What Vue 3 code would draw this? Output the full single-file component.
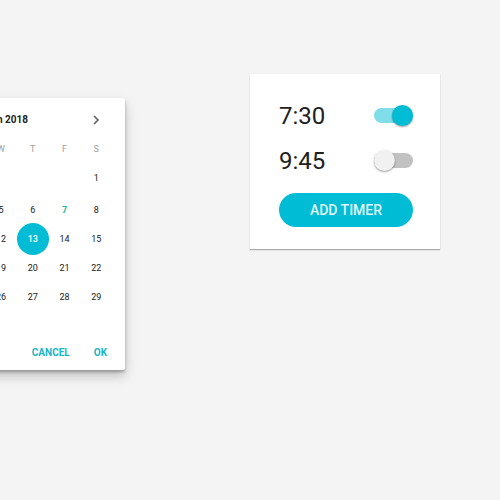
<script setup>
import { ref } from "vue";

const weekdays = ["S", "M", "T", "W", "T", "F", "S"];
const weeks = [
  [null, null, null, null, null, null, 1],
  [2, 3, 4, 5, 6, 7, 8],
  [9, 10, 11, 12, 13, 14, 15],
  [16, 17, 18, 19, 20, 21, 22],
  [23, 24, 25, 26, 27, 28, 29],
  [30, 31, null, null, null, null, null],
];
const today = 7;
const selected = ref(13);

const timers = ref([
  { id: "timer-1", time: "7:30", on: true },
  { id: "timer-2", time: "9:45", on: false },
]);
</script>

<template>
  <main class="board">
    <section class="calendar">
      <header class="month">
        <button class="arrow" aria-label="Previous month">
          <svg viewBox="0 0 24 24" width="24" height="24">
            <path d="M14 8l-4 4 4 4" />
          </svg>
        </button>
        <h2>March 2018</h2>
        <button class="arrow" aria-label="Next month">
          <svg viewBox="0 0 24 24" width="24" height="24">
            <path d="M10 8l4 4-4 4" />
          </svg>
        </button>
      </header>
      <table>
        <thead>
          <tr>
            <th v-for="(name, i) in weekdays" :key="i">{{ name }}</th>
          </tr>
        </thead>
        <tbody>
          <tr v-for="(week, w) in weeks" :key="w">
            <td v-for="(day, d) in week" :key="d">
              <button
                v-if="day"
                class="day"
                :class="{ today: day === today, selected: day === selected }"
                @click="selected = day"
              >
                {{ day }}
              </button>
            </td>
          </tr>
        </tbody>
      </table>
      <footer class="actions">
        <button>CANCEL</button>
        <button>OK</button>
      </footer>
    </section>

    <section class="timers">
      <div v-for="timer in timers" :key="timer.id" class="timer">
        <label :for="timer.id">{{ timer.time }}</label>
        <input
          :id="timer.id"
          v-model="timer.on"
          type="checkbox"
          role="switch"
          class="switch"
        />
      </div>
      <button class="add">ADD TIMER</button>
    </section>
  </main>
</template>

<style>
body {
  margin: 0;
  background-color: #f4f4f4;
}
</style>

<style scoped>
.board {
  display: grid;
  grid-template-columns: 1fr 1fr;
  align-items: start;
  box-sizing: border-box;
  min-height: 100vh;
  padding-top: 74px;
  overflow: hidden;
  font-family: Roboto, "Liberation Sans", sans-serif;
  color: #212121;
}
button {
  padding: 0;
  border: 0;
  background: none;
  font-family: inherit;
  color: inherit;
  cursor: pointer;
}
.calendar {
  box-sizing: border-box;
  width: 248px;
  margin: 24px 0 0 -123px;
  padding: 7px 13px 6px;
  border-radius: 2px;
  background-color: #fff;
  box-shadow: 0 2px 3px rgba(0, 0, 0, 0.26), 0 6px 12px rgba(0, 0, 0, 0.22);
}
.month {
  display: flex;
  align-items: center;
  justify-content: space-between;
  height: 29px;
  padding: 0 4px;
}
.month h2 {
  margin: 0;
  font-size: 10px;
  font-weight: 700;
}
.arrow {
  width: 24px;
  height: 24px;
}
.arrow svg {
  display: block;
  fill: none;
  stroke: #616161;
  stroke-width: 1.6;
}
table {
  width: 100%;
  table-layout: fixed;
  border-collapse: collapse;
  font-size: 9px;
}
th,
td {
  height: 29px;
  padding: 0;
  text-align: center;
}
th {
  font-weight: 400;
  color: #9e9e9e;
}
tbody tr:first-child td {
  padding-bottom: 3px;
}
.day {
  display: flex;
  align-items: center;
  justify-content: center;
  width: 32px;
  height: 32px;
  margin: -2px auto;
  border-radius: 50%;
  font-size: 9px;
}
.today {
  font-weight: 700;
  color: #26b99a;
}
.selected {
  font-weight: 500;
  background-color: #00bcd4;
  color: #fff;
}
.actions {
  display: flex;
  justify-content: flex-end;
  margin-right: -7px;
}
.actions button {
  height: 24px;
  padding: 0 12px;
  font-size: 10px;
  font-weight: 700;
  color: #18b4c4;
}
.timers {
  box-sizing: border-box;
  width: 76%;
  min-width: 190px;
  padding: 19px 27px 22px 29px;
  background-color: #fff;
  box-shadow: 0 1px 1px rgba(0, 0, 0, 0.3);
}
.timer {
  display: flex;
  align-items: center;
  justify-content: space-between;
  height: 45px;
}
.timer label {
  font-size: 24px;
}
.switch {
  appearance: none;
  display: flex;
  align-items: center;
  width: 39px;
  height: 15px;
  margin: 0;
  border-radius: 8px;
  background-color: #c2c2c2;
  cursor: pointer;
}
.switch::before {
  content: "";
  flex: none;
  width: 21px;
  height: 21px;
  border-radius: 50%;
  background-color: #f1f1f1;
  box-shadow: 0 1px 2px rgba(0, 0, 0, 0.4);
}
.switch:checked {
  justify-content: flex-end;
  background-color: #80deea;
}
.switch:checked::before {
  background-color: #00bcd4;
}
.add {
  display: block;
  width: 100%;
  height: 34px;
  margin-top: 10px;
  border-radius: 17px;
  background-color: #00bcd4;
  font-size: 14px;
  font-weight: 500;
  color: #e0f7fa;
}
</style>
